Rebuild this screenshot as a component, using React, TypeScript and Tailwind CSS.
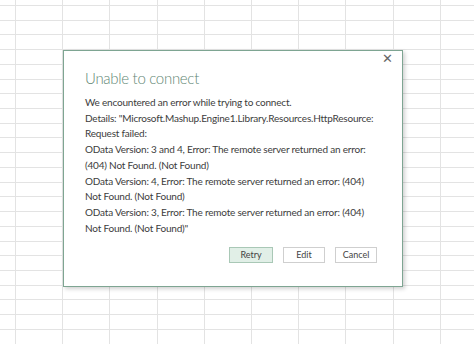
import React from "react";

const COLS = 11;
const ROWS = 24;

const lines = [
  "We encountered an error while trying to connect.",
  "Details: \"Microsoft.Mashup.Engine1.Library.Resources.HttpResource:",
  "Request failed:",
  "OData Version: 3 and 4, Error: The remote server returned an error:",
  "(404) Not Found. (Not Found)",
  "OData Version: 4, Error: The remote server returned an error: (404)",
  "Not Found. (Not Found)",
  "OData Version: 3, Error: The remote server returned an error: (404)",
  "Not Found. (Not Found)\"",
];

export default function App() {
  const cells = [];
  for (let r = 0; r < ROWS; r++) {
    for (let c = 0; c < COLS; c++) {
      cells.push(<div key={r + "-" + c} className="border-r border-b border-[#e3e3e3]" />);
    }
  }

  return (
    <div className="relative w-[474px] h-[344px] overflow-hidden bg-white" style={{ fontFamily: 'Lato, "Open Sans", sans-serif' }}>
      {/* sheet grid */}
      <div className="grid grid-cols-[16px_repeat(10,47.2px)] grid-rows-[6px_repeat(23,14.73px)]">
        {cells}
      </div>

      {/* dialog */}
      <div className="absolute left-[63px] top-[50px] w-[340px] h-[237px] bg-white border border-[#7ea592] shadow-[2px_2px_4px_rgba(0,0,0,0.18)] flex flex-col pl-[21px] pr-[25px]">
        <div className="absolute right-[9px] top-[1px] text-[#666] text-[13px] leading-none font-light">✕</div>
        <div className="mt-[16px] text-[15px] tracking-[-0.3px] leading-[22px] font-light text-[#628774]">Unable to connect</div>
        <div className="mt-[6px] text-[10px] tracking-[-0.2px] leading-[15.7px] text-[#3c3c3c]">
          {lines.map((l, i) => (
            <div key={i} className="whitespace-nowrap">{l}</div>
          ))}
        </div>
        <div className="mt-auto mb-[23px] flex justify-end gap-[10px] text-[9px] text-[#444]">
          <div className="w-[44px] h-[16px] flex items-center justify-center bg-[#e1efe7] border border-[#a9c8b6]">Retry</div>
          <div className="w-[42px] h-[16px] flex items-center justify-center bg-white border border-[#cfcfcf]">Edit</div>
          <div className="w-[42px] h-[16px] flex items-center justify-center bg-white border border-[#cfcfcf]">Cancel</div>
        </div>
      </div>
    </div>
  );
}
